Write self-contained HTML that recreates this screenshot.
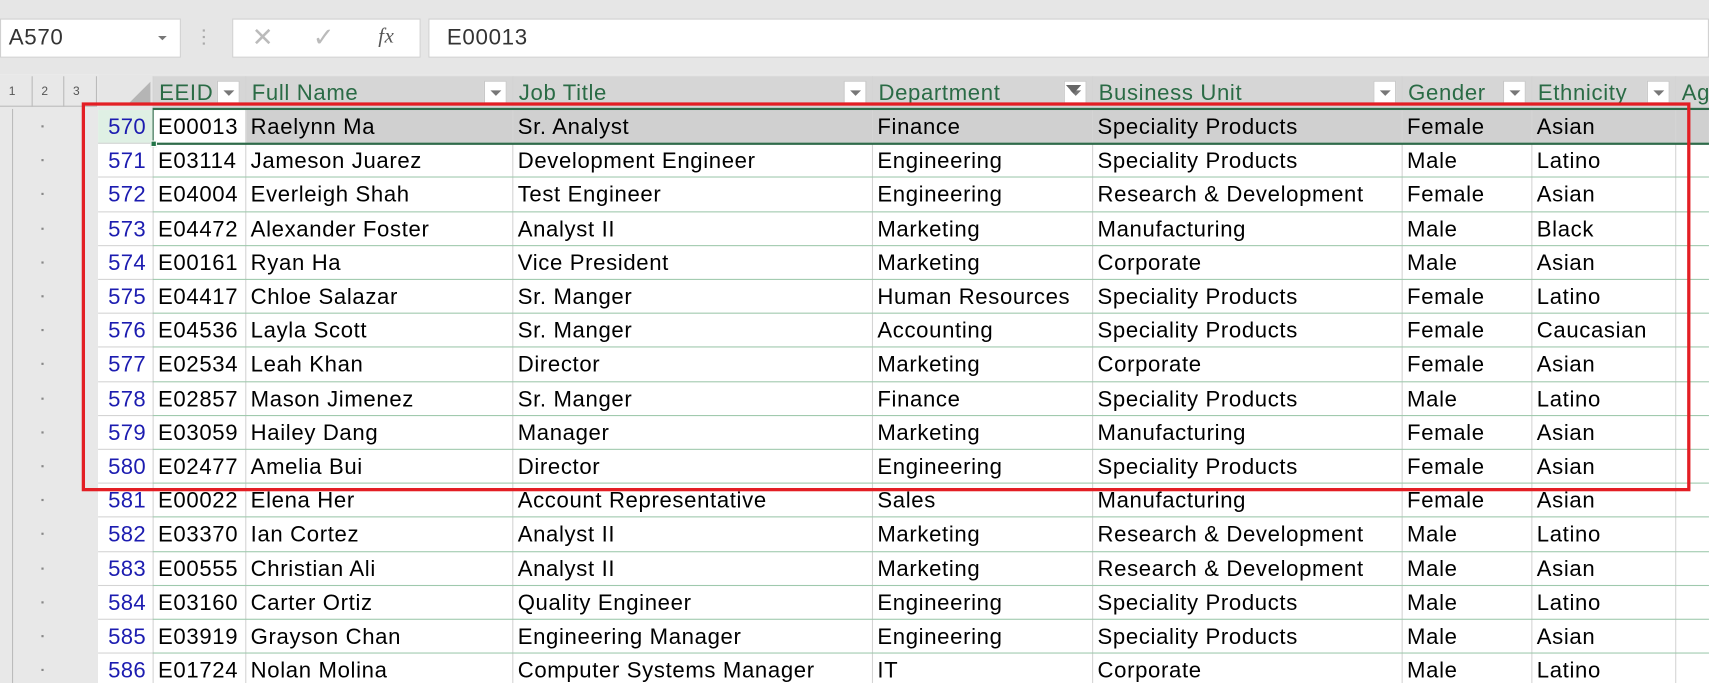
<!DOCTYPE html>
<html><head><meta charset="utf-8"><style>
html,body{margin:0;padding:0;width:1709px;height:683px;overflow:hidden;background:#fff}
#w{position:absolute;left:0;top:0;width:1568px;height:627px;transform:scale(1.0899,1.0893);transform-origin:0 0;font-family:"Liberation Sans",sans-serif;background:#fff;overflow:hidden}
.a{position:absolute;box-sizing:border-box}
.t{position:absolute;white-space:nowrap;font-size:20.3px;letter-spacing:0.6px;line-height:32px;color:#000}
.h{color:#2a6b45}
.rn{color:#1c1cb0;text-align:right;letter-spacing:0.3px}
.dd{position:absolute;width:21px;height:21px;background:#fff;border:1px solid #c8c8c8;box-sizing:border-box}
.dd:after{content:"";position:absolute;left:5px;top:8px;border-left:5px solid transparent;border-right:5px solid transparent;border-top:5px solid #777}
</style></head><body><div id="w">
<div class="a" style="left:0;top:0;width:1568px;height:68px;background:#e6e6e6"></div>
<div class="a" style="left:0;top:17px;width:166px;height:36px;background:#fff;border:1px solid #d0d0d0"></div>
<div class="t" style="left:8px;top:19px;font-size:20.5px;color:#333">A570</div>
<div class="a" style="left:145px;top:33px;border-left:4px solid transparent;border-right:4px solid transparent;border-top:4px solid #777"></div>
<div class="a" style="left:186px;top:27px;width:2px;height:2px;background:#aaa;box-shadow:0 6px #aaa,0 12px #aaa"></div>
<div class="a" style="left:213px;top:17px;width:173px;height:36px;background:#fff;border:1px solid #d0d0d0"></div>
<div class="t" style="left:231px;top:19px;font-size:24px;color:#bbb">✕</div>
<div class="t" style="left:287px;top:19px;font-size:24px;color:#bbb">✓</div>
<div class="t" style="left:347px;top:18px;font-size:19px;font-style:italic;font-family:'Liberation Serif',serif;color:#555">fx</div>
<div class="a" style="left:393px;top:17px;width:1175px;height:36px;background:#fff;border:1px solid #d0d0d0"></div>
<div class="t" style="left:410px;top:19px;font-size:20.5px;color:#333">E00013</div>
<div class="a" style="left:0;top:68px;width:90px;height:559px;background:#e8e8e8"></div>
<div class="a" style="left:0;top:70px;width:88px;height:28px;border-bottom:1px solid #bbb"></div>
<div class="a" style="left:29px;top:70px;width:1px;height:28px;background:#bbb"></div>
<div class="a" style="left:58px;top:70px;width:1px;height:28px;background:#bbb"></div>
<div class="a" style="left:88px;top:70px;width:1px;height:28px;background:#bbb"></div>
<div class="t" style="left:8px;top:70px;font-size:11px;line-height:28px;color:#555">1</div>
<div class="t" style="left:38px;top:70px;font-size:11px;line-height:28px;color:#555">2</div>
<div class="t" style="left:67px;top:70px;font-size:11px;line-height:28px;color:#555">3</div>
<div class="a" style="left:11px;top:100px;width:1px;height:527px;background:#bbb"></div>
<div class="a" style="left:90px;top:68px;width:1478px;height:33px;background:#e6e6e6"></div>
<div class="a" style="left:140px;top:70px;width:1428px;height:31px;background:#d6d6d6"></div>
<div class="a" style="left:118px;top:75px;width:0;height:0;border-left:20px solid transparent;border-bottom:20px solid #b5b5b5"></div>
<div class="a" style="left:90px;top:101px;width:50px;height:526px;background:#fff"></div>
<div class="a" style="left:90px;top:101px;width:50px;height:31px;background:#dff0e4"></div>
<div class="a" style="left:140px;top:101px;width:1428px;height:31px;background:#d0d0d0"></div>
<div class="a" style="left:140px;top:101px;width:86px;height:31px;background:#fff"></div>
<div id="g"></div>
<div class="a" style="left:140px;top:99px;width:1428px;height:2px;background:#2f6b4a"></div>
<div class="a" style="left:140px;top:131px;width:1428px;height:2px;background:#2f6b4a"></div>
<div class="a" style="left:140px;top:101px;width:1px;height:31px;background:#2f6b4a"></div>
<div class="a" style="left:138px;top:129px;width:6px;height:6px;background:#217346;border:1px solid #fff"></div>
<div class="a" style="left:75px;top:94px;width:1476px;height:357px;border:3px solid #e31e24"></div>
</div>
<script>
var cols=[140,225,470,800,1002,1286,1405,1537];
var hd=["EEID","Full Name","Job Title","Department","Business Unit","Gender","Ethnicity","Ag"];
var rows=[
["E00013","Raelynn Ma","Sr. Analyst","Finance","Speciality Products","Female","Asian"],
["E03114","Jameson Juarez","Development Engineer","Engineering","Speciality Products","Male","Latino"],
["E04004","Everleigh Shah","Test Engineer","Engineering","Research & Development","Female","Asian"],
["E04472","Alexander Foster","Analyst II","Marketing","Manufacturing","Male","Black"],
["E00161","Ryan Ha","Vice President","Marketing","Corporate","Male","Asian"],
["E04417","Chloe Salazar","Sr. Manger","Human Resources","Speciality Products","Female","Latino"],
["E04536","Layla Scott","Sr. Manger","Accounting","Speciality Products","Female","Caucasian"],
["E02534","Leah Khan","Director","Marketing","Corporate","Female","Asian"],
["E02857","Mason Jimenez","Sr. Manger","Finance","Speciality Products","Male","Latino"],
["E03059","Hailey Dang","Manager","Marketing","Manufacturing","Female","Asian"],
["E02477","Amelia Bui","Director","Engineering","Speciality Products","Female","Asian"],
["E00022","Elena Her","Account Representative","Sales","Manufacturing","Female","Asian"],
["E03370","Ian Cortez","Analyst II","Marketing","Research & Development","Male","Latino"],
["E00555","Christian Ali","Analyst II","Marketing","Research & Development","Male","Asian"],
["E03160","Carter Ortiz","Quality Engineer","Engineering","Speciality Products","Male","Latino"],
["E03919","Grayson Chan","Engineering Manager","Engineering","Speciality Products","Male","Asian"],
["E01724","Nolan Molina","Computer Systems Manager","IT","Corporate","Male","Latino"]];
var h="",P=31.2,T=101;
cols.forEach(function(x,i){
 h+='<div class="a" style="left:'+(x)+'px;top:70px;width:1px;height:557px;background:#d4d4d4"></div>';
 h+='<div class="t h" style="left:'+(x+6)+'px;top:70px">'+hd[i]+'</div>';
 if(i<7){var dx=cols[i+1]-26;h+='<div class="dd" style="left:'+dx+'px;top:74px"></div>';}
});
h+='<div class="a" style="left:978px;top:78px;width:0;height:0;border-left:7px solid transparent;border-right:7px solid transparent;border-top:8px solid #666"></div>';
rows.forEach(function(r,j){
 var y=T+j*P;
 h+='<div class="a" style="left:140px;top:'+(y+P-1)+'px;width:1428px;height:1px;background:#9fc9ad"></div>';
 h+='<div class="a" style="left:90px;top:'+(y+P-1)+'px;width:50px;height:1px;background:#d4d4d4"></div>';
 h+='<div class="a" style="left:38px;top:'+(y+14)+'px;width:2px;height:2px;background:#888"></div>';
 h+='<div class="t rn" style="left:90px;width:44px;top:'+y+'px">'+(570+j)+'</div>';
 r.forEach(function(c,i){h+='<div class="t" style="left:'+(cols[i]+5)+'px;top:'+y+'px">'+c.replace(/&/g,"&amp;")+'</div>';});
});
document.getElementById('g').outerHTML=h;
</script>
</body></html>
